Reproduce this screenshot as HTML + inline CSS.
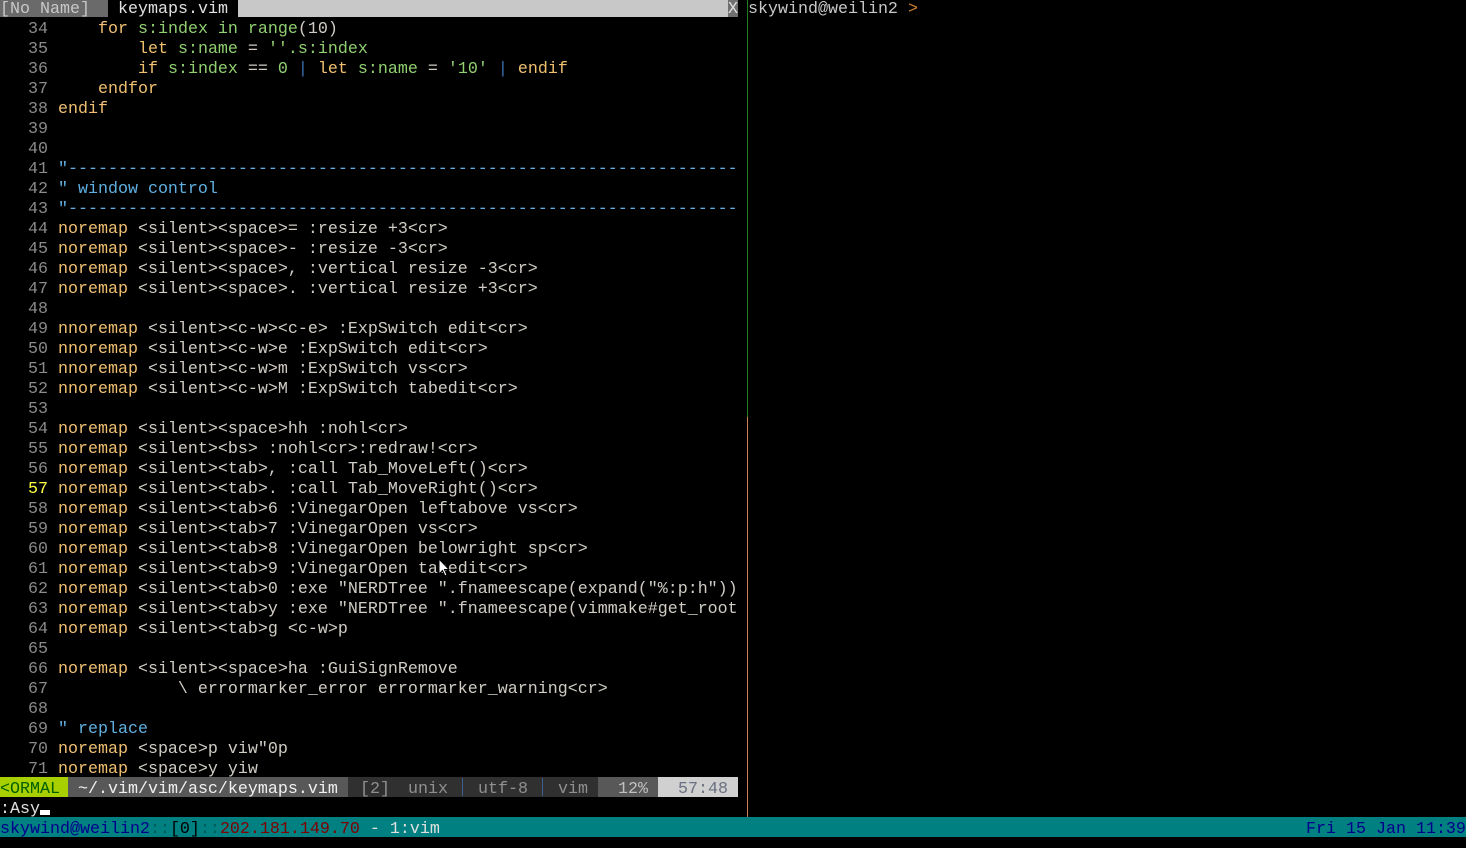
<!DOCTYPE html>
<html><head><meta charset="utf-8"><style>
html,body{margin:0;padding:0;background:#000;width:1466px;height:848px;overflow:hidden}
body{position:relative;font-family:"Liberation Mono",monospace;font-size:16.67px;color:#d0ccc4}
.r{position:absolute;left:8px;height:20px;line-height:20px;white-space:pre;padding-top:3px}
.n{color:#8a8a8a}.k{color:#f0c070}.g{color:#90d070}.c{color:#5fb0e0}.y{color:#ffff40}.b{color:#3a6fb0}
.abs{position:absolute;white-space:pre;line-height:20px}
.t{position:absolute;white-space:pre;line-height:20px;padding-top:3px;box-sizing:border-box;height:20px}
</style></head><body>
<div class="abs" style="left:0;top:-3px;width:738px;height:20px;background:#c8c8c8"></div>
<div class="t" style="left:0;top:-3px;width:108px;background:#6a6a6a;color:#c8c8c8">[No Name]</div>
<div class="t" style="left:108px;top:-3px;width:130px;background:#000;color:#e0e0e0"> keymaps.vim</div>
<div class="t" style="left:728px;top:-3px;width:10px;background:#707070;color:#e0e0e0">X</div>
<div class="t" style="left:748px;top:-3px;color:#c8c8c8">skywind@weilin2 <span style="color:#d08030">&gt;</span></div>
<div style="position:absolute;left:747px;top:0;width:1px;height:417px;background:#208020"></div>
<div style="position:absolute;left:747px;top:417px;width:1px;height:400px;background:#d08050"></div>

<div class="r" style="top:17px"><span class="n">  34 </span>    <span class="k">for</span> <span class="g">s:index in range</span>(10)</div>
<div class="r" style="top:37px"><span class="n">  35 </span>        <span class="k">let</span> <span class="g">s:name</span> = <span class="g">''.s:index</span></div>
<div class="r" style="top:57px"><span class="n">  36 </span>        <span class="k">if</span> <span class="g">s:index</span> == <span class="g">0</span> <span class="b">|</span> <span class="k">let</span> <span class="g">s:name</span> = <span class="g">'10'</span> <span class="b">|</span> <span class="k">endif</span></div>
<div class="r" style="top:77px"><span class="n">  37 </span>    <span class="k">endfor</span></div>
<div class="r" style="top:97px"><span class="n">  38 </span><span class="k">endif</span></div>
<div class="r" style="top:117px"><span class="n">  39 </span></div>
<div class="r" style="top:137px"><span class="n">  40 </span></div>
<div class="r" style="top:157px"><span class="n">  41 </span><span class="c">"-------------------------------------------------------------------</span></div>
<div class="r" style="top:177px"><span class="n">  42 </span><span class="c">" window control</span></div>
<div class="r" style="top:197px"><span class="n">  43 </span><span class="c">"-------------------------------------------------------------------</span></div>
<div class="r" style="top:217px"><span class="n">  44 </span><span class="k">noremap</span> &lt;silent&gt;&lt;space&gt;= :resize +3&lt;cr&gt;</div>
<div class="r" style="top:237px"><span class="n">  45 </span><span class="k">noremap</span> &lt;silent&gt;&lt;space&gt;- :resize -3&lt;cr&gt;</div>
<div class="r" style="top:257px"><span class="n">  46 </span><span class="k">noremap</span> &lt;silent&gt;&lt;space&gt;, :vertical resize -3&lt;cr&gt;</div>
<div class="r" style="top:277px"><span class="n">  47 </span><span class="k">noremap</span> &lt;silent&gt;&lt;space&gt;. :vertical resize +3&lt;cr&gt;</div>
<div class="r" style="top:297px"><span class="n">  48 </span></div>
<div class="r" style="top:317px"><span class="n">  49 </span><span class="k">nnoremap</span> &lt;silent&gt;&lt;c-w&gt;&lt;c-e&gt; :ExpSwitch edit&lt;cr&gt;</div>
<div class="r" style="top:337px"><span class="n">  50 </span><span class="k">nnoremap</span> &lt;silent&gt;&lt;c-w&gt;e :ExpSwitch edit&lt;cr&gt;</div>
<div class="r" style="top:357px"><span class="n">  51 </span><span class="k">nnoremap</span> &lt;silent&gt;&lt;c-w&gt;m :ExpSwitch vs&lt;cr&gt;</div>
<div class="r" style="top:377px"><span class="n">  52 </span><span class="k">nnoremap</span> &lt;silent&gt;&lt;c-w&gt;M :ExpSwitch tabedit&lt;cr&gt;</div>
<div class="r" style="top:397px"><span class="n">  53 </span></div>
<div class="r" style="top:417px"><span class="n">  54 </span><span class="k">noremap</span> &lt;silent&gt;&lt;space&gt;hh :nohl&lt;cr&gt;</div>
<div class="r" style="top:437px"><span class="n">  55 </span><span class="k">noremap</span> &lt;silent&gt;&lt;bs&gt; :nohl&lt;cr&gt;:redraw!&lt;cr&gt;</div>
<div class="r" style="top:457px"><span class="n">  56 </span><span class="k">noremap</span> &lt;silent&gt;&lt;tab&gt;, :call Tab_MoveLeft()&lt;cr&gt;</div>
<div class="r" style="top:477px"><span class="y">  57 </span><span class="k">noremap</span> &lt;silent&gt;&lt;tab&gt;. :call Tab_MoveRight()&lt;cr&gt;</div>
<div class="r" style="top:497px"><span class="n">  58 </span><span class="k">noremap</span> &lt;silent&gt;&lt;tab&gt;6 :VinegarOpen leftabove vs&lt;cr&gt;</div>
<div class="r" style="top:517px"><span class="n">  59 </span><span class="k">noremap</span> &lt;silent&gt;&lt;tab&gt;7 :VinegarOpen vs&lt;cr&gt;</div>
<div class="r" style="top:537px"><span class="n">  60 </span><span class="k">noremap</span> &lt;silent&gt;&lt;tab&gt;8 :VinegarOpen belowright sp&lt;cr&gt;</div>
<div class="r" style="top:557px"><span class="n">  61 </span><span class="k">noremap</span> &lt;silent&gt;&lt;tab&gt;9 :VinegarOpen tabedit&lt;cr&gt;</div>
<div class="r" style="top:577px"><span class="n">  62 </span><span class="k">noremap</span> &lt;silent&gt;&lt;tab&gt;0 :exe "NERDTree ".fnameescape(expand("%:p:h"))</div>
<div class="r" style="top:597px"><span class="n">  63 </span><span class="k">noremap</span> &lt;silent&gt;&lt;tab&gt;y :exe "NERDTree ".fnameescape(vimmake#get_root</div>
<div class="r" style="top:617px"><span class="n">  64 </span><span class="k">noremap</span> &lt;silent&gt;&lt;tab&gt;g &lt;c-w&gt;p</div>
<div class="r" style="top:637px"><span class="n">  65 </span></div>
<div class="r" style="top:657px"><span class="n">  66 </span><span class="k">noremap</span> &lt;silent&gt;&lt;space&gt;ha :GuiSignRemove</div>
<div class="r" style="top:677px"><span class="n">  67 </span>            \ errormarker_error errormarker_warning&lt;cr&gt;</div>
<div class="r" style="top:697px"><span class="n">  68 </span></div>
<div class="r" style="top:717px"><span class="n">  69 </span><span class="c">" replace</span></div>
<div class="r" style="top:737px"><span class="n">  70 </span><span class="k">noremap</span> &lt;space&gt;p viw"0p</div>
<div class="r" style="top:757px"><span class="n">  71 </span><span class="k">noremap</span> &lt;space&gt;y yiw</div>

<svg style="position:absolute;left:438px;top:558px" width="12" height="20" viewBox="0 0 12 20"><path d="M1 1 L1 16 L4.5 12.5 L7 18 L9 17 L6.5 11.5 L11 11.5 Z" fill="#fff" stroke="#000" stroke-width="1"/></svg>

<div class="abs" style="left:0;top:777px;width:738px;height:20px;background:#303030"></div>
<div class="t" style="left:0;top:777px;width:68px;background:#a8d000;color:#005f00">&lt;ORMAL</div>
<div class="t" style="left:68px;top:777px;width:280px;background:#585858;color:#f0f0f0"> ~/.vim/vim/asc/keymaps.vim</div>
<div class="t" style="left:360px;top:777px;color:#909090">[2]</div>
<div class="t" style="left:408px;top:777px;color:#909090">unix</div>
<div class="t" style="left:478px;top:777px;color:#909090">utf-8</div>
<div class="t" style="left:558px;top:777px;color:#909090">vim</div>
<div style="position:absolute;left:462px;top:778px;width:1px;height:18px;background:#3a5f90"></div>
<div style="position:absolute;left:542px;top:778px;width:1px;height:18px;background:#3a5f90"></div>
<div class="t" style="left:598px;top:777px;width:60px;background:#585858;color:#c0c0c0">  12%</div>
<div class="t" style="left:658px;top:777px;width:80px;background:#d0d0d0;color:#6a7080">  57:48</div>
<div class="t" style="left:0;top:797px;color:#e0e0e0">:Asy<span style="display:inline-block;width:10px;height:5px;background:#fff;vertical-align:-2px"></span></div>

<div class="abs" style="left:0;top:817px;width:1466px;height:20px;background:#008080"></div>
<div class="t" style="left:0;top:817px;color:#00008b">skywind@weilin2<span style="color:#005858">::</span><span style="color:#000">[0]</span><span style="color:#005858">::</span><span style="color:#800000">202.181.149.70</span><span style="color:#e0e0e0"> - 1:vim</span></div>
<div class="t" style="left:1306px;top:817px;color:#00008b">Fri 15 Jan 11:39</div>
</body></html>
